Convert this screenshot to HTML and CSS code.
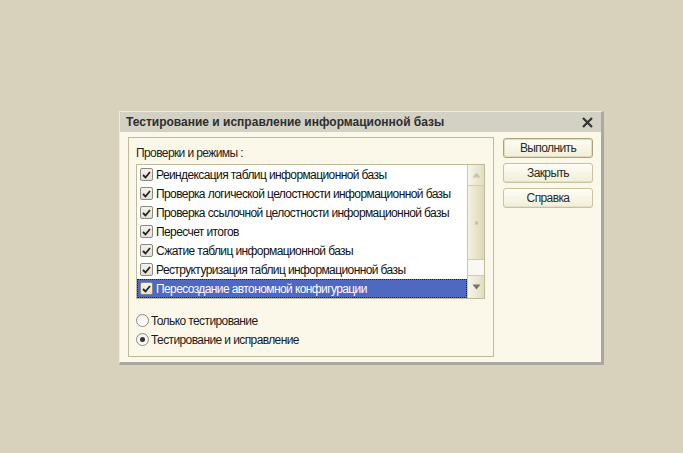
FILE: index.html
```html
<!DOCTYPE html>
<html lang="ru">
<head>
<meta charset="utf-8">
<title>Тестирование и исправление информационной базы</title>
<link rel="stylesheet" href="styles.css">
</head>
<body>
<div class="dialog">
  <div class="titlebar">
    <span class="title">Тестирование и исправление информационной базы</span>
    <svg class="close" width="11" height="11" viewBox="0 0 11 11"><path d="M1 1L10 10M10 1L1 10" stroke="#333" stroke-width="2.2"/></svg>
  </div>
  <div class="body">
    <div class="group">
      <div class="label">Проверки и режимы :</div>
      <div class="list">
        <div class="items">
          <div class="item"><span class="cb"><svg width="9" height="8" viewBox="0 0 9 8"><path d="M1 4L3.5 6.5L8 1" fill="none" stroke="#222" stroke-width="1.8"/></svg></span>Реиндексация таблиц информационной базы</div>
          <div class="item"><span class="cb"><svg width="9" height="8" viewBox="0 0 9 8"><path d="M1 4L3.5 6.5L8 1" fill="none" stroke="#222" stroke-width="1.8"/></svg></span>Проверка логической целостности информационной базы</div>
          <div class="item"><span class="cb"><svg width="9" height="8" viewBox="0 0 9 8"><path d="M1 4L3.5 6.5L8 1" fill="none" stroke="#222" stroke-width="1.8"/></svg></span>Проверка ссылочной целостности информационной базы</div>
          <div class="item"><span class="cb"><svg width="9" height="8" viewBox="0 0 9 8"><path d="M1 4L3.5 6.5L8 1" fill="none" stroke="#222" stroke-width="1.8"/></svg></span>Пересчет итогов</div>
          <div class="item"><span class="cb"><svg width="9" height="8" viewBox="0 0 9 8"><path d="M1 4L3.5 6.5L8 1" fill="none" stroke="#222" stroke-width="1.8"/></svg></span>Сжатие таблиц информационной базы</div>
          <div class="item"><span class="cb"><svg width="9" height="8" viewBox="0 0 9 8"><path d="M1 4L3.5 6.5L8 1" fill="none" stroke="#222" stroke-width="1.8"/></svg></span>Реструктуризация таблиц информационной базы</div>
          <div class="item selected"><span class="cb"><svg width="9" height="8" viewBox="0 0 9 8"><path d="M1 4L3.5 6.5L8 1" fill="none" stroke="#222" stroke-width="1.8"/></svg></span>Пересоздание автономной конфигурации</div>
        </div>
        <div class="scrollbar">
          <div class="sb-btn"><svg width="9" height="6" viewBox="0 0 9 6"><path d="M0.5 5.5L4.5 0.5L8.5 5.5Z" fill="#c6c3ae"/></svg></div>
          <div class="sb-thumb"><span class="grip"></span></div>
          <div class="sb-track"></div>
          <div class="sb-btn down"><svg width="9" height="6" viewBox="0 0 9 6"><path d="M0.5 0.5L4.5 5.5L8.5 0.5Z" fill="#75746c"/></svg></div>
        </div>
      </div>
      <div class="radios">
        <div class="radio"><span class="rb"></span>Только тестирование</div>
        <div class="radio"><span class="rb on"></span>Тестирование и исправление</div>
      </div>
    </div>
    <div class="buttons">
      <div class="btn default">Выполнить</div>
      <div class="btn">Закрыть</div>
      <div class="btn">Справка</div>
    </div>
  </div>
</div>
</body>
</html>
```
FILE: styles.css
```css
html, body {
  margin: 0;
  padding: 0;
}
body {
  background: #d8d2bd;
  width: 683px;
  height: 453px;
  overflow: hidden;
  font-family: "Liberation Sans", Arial, sans-serif;
  font-size: 12px;
  letter-spacing: -0.6px;
  color: #1a1a1a;
}
.dialog {
  margin-left: 119px;
  margin-top: 111px;
  width: 481px;
  height: 250px;
  border-top: 1px solid #eceae2;
  border-left: 1px solid #eceae2;
  border-right: 3px solid #a9a8a2;
  border-bottom: 3px solid #a9a8a2;
  background: #fbf8e9;
  display: flex;
  flex-direction: column;
}
.titlebar {
  height: 20px;
  background: #d3d0c4;
  display: flex;
  align-items: center;
  justify-content: space-between;
  padding: 0 8px 0 6px;
}
.title {
  font-weight: bold;
  font-size: 12px;
  letter-spacing: 0;
  color: #2e2e2e;
}
.close {
  display: block;
}
.body {
  flex: 1;
  display: flex;
  padding: 5px 8px 0 8px;
}
.group {
  width: 362px;
  height: 218px;
  border: 1px solid #bfbb98;
  display: flex;
  flex-direction: column;
  padding: 0 6px 0 7px;
}
.label {
  height: 26px;
  line-height: 30px;
  color: #222;
}
.list {
  width: 347px;
  height: 133px;
  border: 1px solid #bfbb98;
  background: #fff;
  display: flex;
}
.items {
  flex: 1;
  display: flex;
  flex-direction: column;
}
.item {
  height: 19px;
  display: flex;
  align-items: center;
  color: #111;
  padding-left: 3px;
  padding-top: 1px;
  box-sizing: border-box;
  white-space: nowrap;
}
.item .cb {
  margin-top: -1px;
}
.item.selected {
  background: #4f68c2;
  color: #fff;
  outline: 1px dotted #222;
  outline-offset: -1px;
}
.cb {
  width: 11px;
  height: 11px;
  border: 1px solid #8b8a82;
  border-radius: 2px;
  background: linear-gradient(#f4f2ea, #e3e0d4);
  display: flex;
  align-items: center;
  justify-content: center;
  margin-right: 3px;
  flex: none;
}
.scrollbar {
  width: 16px;
  border-left: 1px solid #c9c6b0;
  display: flex;
  flex-direction: column;
  background: #f9f8f2;
}
.sb-btn {
  height: 20px;
  background: linear-gradient(90deg, #f7f5e8, #e2dec2);
  border-bottom: 1px solid #cfcbb4;
  display: flex;
  align-items: center;
  justify-content: center;
}
.sb-btn.down {
  border-bottom: none;
  border-top: 1px solid #cfcbb4;
  height: 22px;
}
.sb-thumb {
  height: 73px;
  background: linear-gradient(90deg, #f4f1e0, #ddd8b8);
  border-bottom: 1px solid #cfcbb4;
  display: flex;
  align-items: center;
  justify-content: center;
}
.grip {
  width: 3px;
  height: 4px;
  background: #c6c1a4;
  border-radius: 50%;
}
.sb-track {
  flex: 1;
  background: #f9f8f3;
}
.radios {
  display: flex;
  flex-direction: column;
  padding-top: 12px;
}
.radio {
  height: 19px;
  display: flex;
  align-items: center;
  color: #1a1a1a;
}
.rb {
  width: 11px;
  height: 11px;
  border: 1px solid #8e8d84;
  border-radius: 50%;
  background: linear-gradient(#f2f0e8, #fff);
  margin-right: 2px;
  position: relative;
  flex: none;
}
.rb.on::after {
  content: "";
  position: absolute;
  left: 3px;
  top: 3px;
  width: 5px;
  height: 5px;
  border-radius: 50%;
  background: #333;
}
.buttons {
  margin-left: 9px;
  display: flex;
  flex-direction: column;
  gap: 5px;
  padding-top: 1px;
}
.btn {
  width: 88px;
  height: 18px;
  border: 1px solid #c8c29e;
  border-radius: 3px;
  background: linear-gradient(#fefdf6, #f1eed8);
  box-shadow: inset 0 -1px 0 #e3dfc4;
  font-size: 12px;
  color: #2a2a2a;
  display: flex;
  align-items: center;
  justify-content: center;
}
.btn.default {
  border: 1px solid #aaa37a;
  box-shadow: inset 0 0 0 1px #e2dcb8;
}
```
